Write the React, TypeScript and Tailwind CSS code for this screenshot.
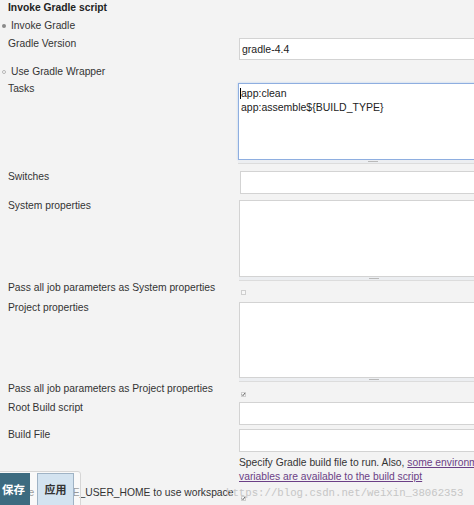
import React from "react";

const Grip = () => (
  <div className="relative h-[4px] w-full bg-[#eceef1] border-b border-[#dcdcdc]">
    <div className="absolute left-[130px] top-[1px] h-[1px] w-[10px] bg-[#b9b9b9]" />
  </div>
);

const Radio = ({ checked, label }: { checked?: boolean; label: string }) => (
  <div className="flex items-center h-[12px]">
    <span
      className={`ml-[2px] mr-[5px] block h-[4px] w-[4px] rounded-full ${
        checked ? "bg-[#8a8a8a]" : "border border-[#b5b5b5] bg-white"
      }`}
    />
    <span className="leading-[12px]">{label}</span>
  </div>
);

const Check = ({ checked }: { checked?: boolean }) => (
  <span className="ml-[2px] block h-[5px] w-[5px] border border-[#cfcfcf] bg-[#f7f7f7] relative">
    {checked && (
      <svg viewBox="0 0 5 5" className="absolute -left-[1px] -top-[1px] h-[5px] w-[5px]">
        <path d="M1 2.6 L2 3.6 L4 1" fill="none" stroke="#555" strokeWidth="0.9" />
      </svg>
    )}
  </span>
);

export default function App() {
  return (
    <div className="relative h-[505px] w-[474px] overflow-hidden bg-[#f3f3f3] font-['Liberation_Sans',Arial,sans-serif] text-[10.3px] text-[#333]">
      <div className="flex flex-col pt-[2px]">
        <div className="pl-[8px] leading-[12px] font-bold text-[#222]">Invoke Gradle script</div>

        <div className="mt-[6px]">
          <Radio checked label="Invoke Gradle" />
        </div>

        <div className="mt-[6px] flex items-start">
          <div className="w-[239px] shrink-0 pl-[8px] leading-[12px]">Gradle Version</div>
          <div className="h-[22px] w-[260px] shrink-0 border border-[#d3d3d3] bg-white pl-[2px] text-[10.5px] leading-[20px] text-[#222]">
            gradle-4.4
          </div>
        </div>

        <div className="mt-[6px]">
          <Radio label="Use Gradle Wrapper" />
        </div>

        <div className="mt-[5px] flex items-start">
          <div className="w-[238px] shrink-0 pl-[8px] leading-[12px]">Tasks</div>
          <div className="w-[260px] shrink-0">
            <div className="h-[77px] border border-[#8eaee0] bg-white pl-[2px] pt-[2px] text-[10.5px] leading-[14px] text-[#222] shadow-[0_0_2px_#b9cff0]">
              <div className="relative">
                <span className="absolute -left-[1px] top-[2px] h-[11px] w-[1px] bg-black" />
                app:clean
              </div>
              <div>app:assemble${"{"}BUILD_TYPE{"}"}</div>
            </div>
            <Grip />
          </div>
        </div>

        <div className="mt-[7px] flex items-start">
          <div className="w-[240px] shrink-0 pl-[8px] leading-[12px]">Switches</div>
          <div className="h-[23px] w-[260px] shrink-0 border border-[#d3d3d3] bg-white" />
        </div>

        <div className="mt-[6px] flex items-start">
          <div className="w-[239px] shrink-0 pl-[8px] leading-[12px]">System properties</div>
          <div className="w-[260px] shrink-0">
            <div className="h-[77px] border border-[#d3d3d3] bg-white" />
            <Grip />
          </div>
        </div>

        <div className="mt-[1px] flex h-[14px] items-start">
          <div className="w-[239px] shrink-0 pl-[8px] leading-[12px]">
            Pass all job parameters as System properties
          </div>
          <div className="pt-[8px]">
            <Check />
          </div>
        </div>

        <div className="mt-[6px] flex items-start">
          <div className="w-[239px] shrink-0 pl-[8px] leading-[12px]">Project properties</div>
          <div className="w-[260px] shrink-0">
            <div className="h-[76px] border border-[#d3d3d3] bg-white" />
            <Grip />
          </div>
        </div>

        <div className="mt-[1px] flex h-[14px] items-start">
          <div className="w-[239px] shrink-0 pl-[8px] leading-[12px]">
            Pass all job parameters as Project properties
          </div>
          <div className="pt-[9px]">
            <Check checked />
          </div>
        </div>

        <div className="mt-[5px] flex items-start">
          <div className="w-[239px] shrink-0 pl-[8px] leading-[12px]">Root Build script</div>
          <div className="h-[23px] w-[260px] shrink-0 border border-[#d3d3d3] bg-white" />
        </div>

        <div className="mt-[4px] flex items-start">
          <div className="w-[239px] shrink-0 pl-[8px] leading-[12px]">Build File</div>
          <div className="h-[23px] w-[260px] shrink-0 border border-[#d3d3d3] bg-white" />
        </div>

        <div className="mt-[4px] flex items-start">
          <div className="w-[239px] shrink-0" />
          <div className="whitespace-nowrap text-[10.3px] leading-[14px]">
            <div>
              Specify Gradle build file to run. Also,{" "}
              <span className="text-[#6b3f86] underline">some environment</span>
            </div>
            <div className="text-[#6b3f86] underline">variables are available to the build script</div>
          </div>
        </div>

        <div className="mt-[3px] flex h-[14px] items-start">
          <div className="w-[239px] shrink-0 pl-[8px] leading-[12px]">
            Force GRADLE_USER_HOME to use workspace
          </div>
          <div className="pt-[9px]">
            <Check checked />
          </div>
        </div>
      </div>

      {/* watermark */}
      <div className="absolute left-[226px] top-[486px] font-['Liberation_Mono',monospace] text-[10.7px] leading-[14px] text-[#c6c6c6]">
        https://blog.csdn.net/weixin_38062353
      </div>

      {/* floating save bar */}
      <div className="absolute bottom-[-4px] left-[-4px] flex h-[38px] w-[85px] items-end gap-[7px] rounded-tr-[3px] border border-[#d6d6d6] bg-white/50">
        <div className="flex h-[35px] w-[33px] items-start justify-center bg-[#3c6b80] pt-[9px] font-['Noto_Sans_CJK_SC',sans-serif] text-[11.5px] leading-[14px] font-bold text-white">
          保存
        </div>
        <div className="flex h-[35px] w-[37px] items-start justify-center border border-[#9fb3c5] bg-[#d3e3f0] pt-[8px] font-['Noto_Sans_CJK_SC',sans-serif] text-[11px] leading-[14px] font-bold text-[#333]">
          应用
        </div>
      </div>
    </div>
  );
}
